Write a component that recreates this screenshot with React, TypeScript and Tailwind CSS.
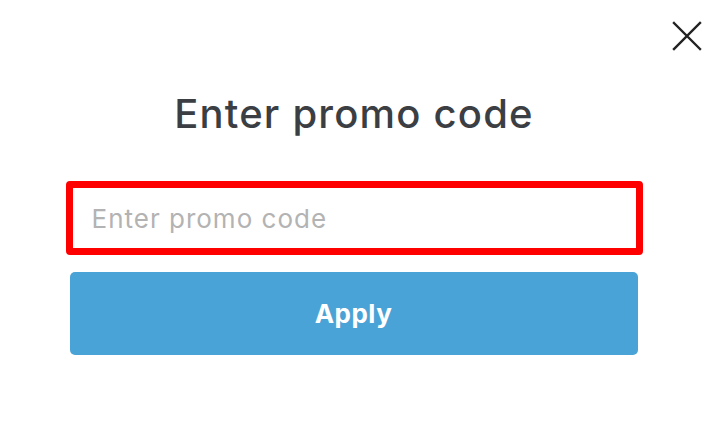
import React from "react";

export default function App() {
  return (
    <div className="w-[720px] h-[435px] bg-white relative overflow-hidden" style={{ fontFamily: 'Inter, "Liberation Sans", Arial, sans-serif' }}>
      <button className="absolute right-[17px] top-[20px] w-[32px] h-[32px] flex items-center justify-center">
        <svg width="32" height="32" viewBox="0 0 32 32">
          <path d="M3 3 L29 29 M29 3 L3 29" stroke="#222" strokeWidth="2.4" strokeLinecap="square" />
        </svg>
      </button>
      <div className="flex flex-col items-center pt-[88px]">
        <h1 className="ml-[-12px] text-[40px] leading-[52px] tracking-[1.2px] text-[#3b3e43] font-medium">Enter promo code</h1>
        <div className="mt-[41px] w-[577px] ml-[-12px] h-[74px] border-[7px] border-[#ff0000] rounded-[4px] flex items-center pl-[19px]">
          <span className="text-[26px] tracking-[1px] text-[#b3b3b3]">Enter promo code</span>
        </div>
        <div className="mt-[17px] w-[568px] ml-[-13px] h-[83px] bg-[#4aa3d6] rounded-[5px] flex items-center justify-center">
          <span className="text-[26px] tracking-[0.5px] font-bold text-white">Apply</span>
        </div>
      </div>
    </div>
  );
}
